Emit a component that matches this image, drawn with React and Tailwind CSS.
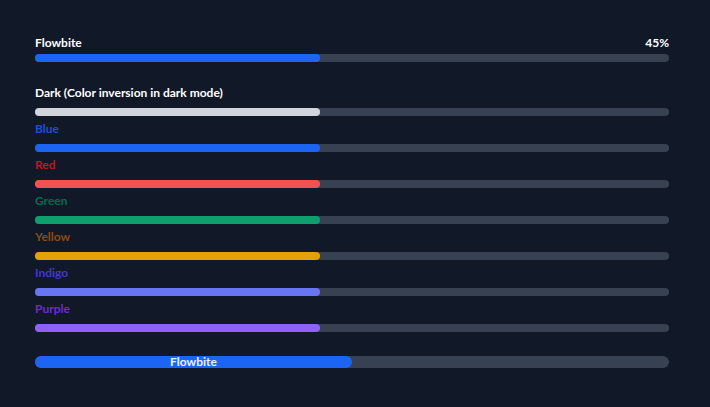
export default function App() {
  const rows = [
    { label: "Blue", text: "text-[#1d4ed8]", bar: "bg-[#1c64f2]" },
    { label: "Red", text: "text-[#b91c1c]", bar: "bg-[#f05252]" },
    { label: "Green", text: "text-[#046c4e]", bar: "bg-[#0e9f6e]" },
    { label: "Yellow", text: "text-[#8e4b10]", bar: "bg-[#e3a008]" },
    { label: "Indigo", text: "text-[#4338ca]", bar: "bg-[#6875f5]" },
    { label: "Purple", text: "text-[#6c2bd9]", bar: "bg-[#9061f9]" },
  ];
  return (
    <div className="w-[710px] h-[407px] bg-[#111827] pt-[35px] pl-[35px] font-['Lato','Noto_Sans',sans-serif]">
      <div className="w-[634px]">
        <div className="flex justify-between mb-[3px] text-xs leading-4 font-bold text-white">
          <span>Flowbite</span>
          <span>45%</span>
        </div>
        <div className="w-full h-2 rounded-full bg-[#374151]">
          <div className="h-2 rounded-full bg-[#1c64f2]" style={{ width: "45%" }} />
        </div>

        <div className="mt-[23px] mb-[7px] text-xs leading-4 font-bold text-white">
          Dark (Color inversion in dark mode)
        </div>
        <div className="w-full h-2 rounded-full bg-[#374151] mb-[5px]">
          <div className="h-2 rounded-full bg-[#d1d5db]" style={{ width: "45%" }} />
        </div>

        {rows.map((r) => (
          <div key={r.label}>
            <div className={`mb-[7px] text-xs leading-4 font-bold ${r.text}`}>{r.label}</div>
            <div className="w-full h-2 rounded-full bg-[#374151] mb-[5px]">
              <div className={`h-2 rounded-full ${r.bar}`} style={{ width: "45%" }} />
            </div>
          </div>
        ))}

        <div className="mt-[24px] w-full h-3 rounded-full bg-[#374151]">
          <div
            className="h-3 rounded-full bg-[#1c64f2] text-center text-xs leading-3 font-bold text-[#ebf5ff]"
            style={{ width: "50%" }}
          >
            Flowbite
          </div>
        </div>
      </div>
    </div>
  );
}
